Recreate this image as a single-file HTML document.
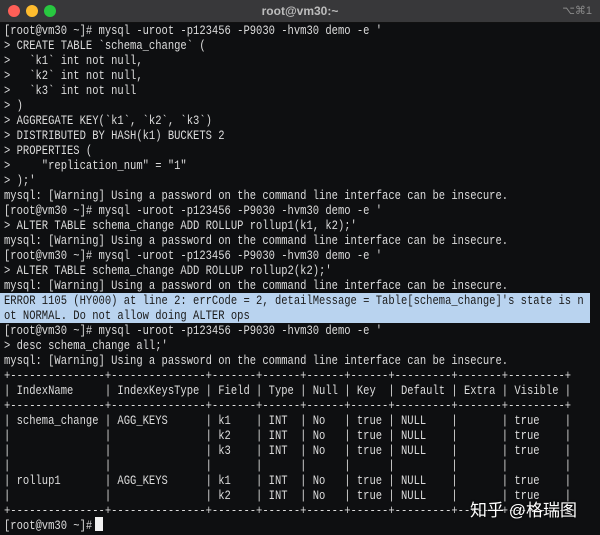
<!DOCTYPE html>
<html><head><style>
body{margin:0;width:600px;height:535px;background:#0e0f11;overflow:hidden;position:relative;font-family:"Liberation Sans",sans-serif}
.tb{position:absolute;left:0;top:0;width:600px;height:22px;background:#38383a;border-bottom:1px solid #111}
.dot{position:absolute;top:5px;width:12px;height:12px;border-radius:50%}
.title{position:absolute;top:4px;width:600px;text-align:center;color:#bdbdbd;font-size:12px;font-weight:bold}
.kb{position:absolute;right:8px;top:4px;color:#8a8a8a;font-size:11px}
pre{position:absolute;left:4px;top:24px;margin:0;font-family:"Liberation Mono",monospace;font-size:12.5px;line-height:15px;color:#dcdcdc;transform:scaleX(0.84);transform-origin:0 0}
.hl{position:absolute;left:0;top:293px;width:590px;height:30px;background:#b9d3ef}
.hl2{color:#1a1a1a}
.wm{position:absolute;left:470px;top:496px;color:#fff;font-family:"Liberation Sans","Noto Sans CJK SC",sans-serif;font-size:17px;text-shadow:0 0 2px #000}
.cur{position:absolute;left:95px;top:517px;width:8px;height:14px;background:#f2f2f2}
</style></head><body>
<div class="tb">
<div class="dot" style="left:8px;background:#fe5f57"></div>
<div class="dot" style="left:26px;background:#febc2e"></div>
<div class="dot" style="left:44px;background:#28c840"></div>
<div class="title">root@vm30:~</div><div class="kb">⌥⌘1</div>
</div>
<div class="hl"></div>
<pre>[root@vm30 ~]# mysql -uroot -p123456 -P9030 -hvm30 demo -e '
&gt; CREATE TABLE `schema_change` (
&gt;   `k1` int not null,
&gt;   `k2` int not null,
&gt;   `k3` int not null
&gt; )
&gt; AGGREGATE KEY(`k1`, `k2`, `k3`)
&gt; DISTRIBUTED BY HASH(k1) BUCKETS 2
&gt; PROPERTIES (
&gt;     "replication_num" = "1"
&gt; );'
mysql: [Warning] Using a password on the command line interface can be insecure.
[root@vm30 ~]# mysql -uroot -p123456 -P9030 -hvm30 demo -e '
&gt; ALTER TABLE schema_change ADD ROLLUP rollup1(k1, k2);'
mysql: [Warning] Using a password on the command line interface can be insecure.
[root@vm30 ~]# mysql -uroot -p123456 -P9030 -hvm30 demo -e '
&gt; ALTER TABLE schema_change ADD ROLLUP rollup2(k2);'
mysql: [Warning] Using a password on the command line interface can be insecure.
<span class="hl2">ERROR 1105 (HY000) at line 2: errCode = 2, detailMessage = Table[schema_change]'s state is n
ot NORMAL. Do not allow doing ALTER ops</span>
[root@vm30 ~]# mysql -uroot -p123456 -P9030 -hvm30 demo -e '
&gt; desc schema_change all;'
mysql: [Warning] Using a password on the command line interface can be insecure.
+---------------+---------------+-------+------+------+------+---------+-------+---------+
| IndexName     | IndexKeysType | Field | Type | Null | Key  | Default | Extra | Visible |
+---------------+---------------+-------+------+------+------+---------+-------+---------+
| schema_change | AGG_KEYS      | k1    | INT  | No   | true | NULL    |       | true    |
|               |               | k2    | INT  | No   | true | NULL    |       | true    |
|               |               | k3    | INT  | No   | true | NULL    |       | true    |
|               |               |       |      |      |      |         |       |         |
| rollup1       | AGG_KEYS      | k1    | INT  | No   | true | NULL    |       | true    |
|               |               | k2    | INT  | No   | true | NULL    |       | true    |
+---------------+---------------+-------+------+------+------+---------+-------+---------+
[root@vm30 ~]#</pre>
<div class="cur"></div>
<div class="wm">知乎 @格瑞图</div>
</body></html>
